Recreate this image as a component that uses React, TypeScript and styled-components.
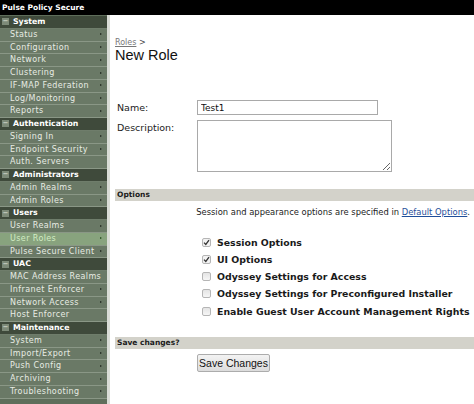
import React from 'react';
import styled, { createGlobalStyle } from 'styled-components';

type NavItem = { label: string; arrow?: boolean; active?: boolean };
type NavGroup = { title: string; items: NavItem[] };

const nav: NavGroup[] = [
  {
    title: 'System',
    items: [
      { label: 'Status', arrow: true },
      { label: 'Configuration', arrow: true },
      { label: 'Network', arrow: true },
      { label: 'Clustering', arrow: true },
      { label: 'IF-MAP Federation', arrow: true },
      { label: 'Log/Monitoring', arrow: true },
      { label: 'Reports', arrow: true },
    ],
  },
  {
    title: 'Authentication',
    items: [
      { label: 'Signing In', arrow: true },
      { label: 'Endpoint Security', arrow: true },
      { label: 'Auth. Servers' },
    ],
  },
  {
    title: 'Administrators',
    items: [
      { label: 'Admin Realms', arrow: true },
      { label: 'Admin Roles', arrow: true },
    ],
  },
  {
    title: 'Users',
    items: [
      { label: 'User Realms', arrow: true },
      { label: 'User Roles', arrow: true, active: true },
      { label: 'Pulse Secure Client', arrow: true },
    ],
  },
  {
    title: 'UAC',
    items: [
      { label: 'MAC Address Realms' },
      { label: 'Infranet Enforcer', arrow: true },
      { label: 'Network Access', arrow: true },
      { label: 'Host Enforcer' },
    ],
  },
  {
    title: 'Maintenance',
    items: [
      { label: 'System', arrow: true },
      { label: 'Import/Export', arrow: true },
      { label: 'Push Config', arrow: true },
      { label: 'Archiving', arrow: true },
      { label: 'Troubleshooting', arrow: true },
    ],
  },
];

const options = [
  { label: 'Session Options', checked: true },
  { label: 'UI Options', checked: true },
  { label: 'Odyssey Settings for Access', checked: false },
  { label: 'Odyssey Settings for Preconfigured Installer', checked: false },
  { label: 'Enable Guest User Account Management Rights', checked: false },
];

function App() {
  return (
    <>
      <GlobalStyle />
      <Page>
        <TopBar>Pulse Policy Secure</TopBar>
        <Body>
          <Sidebar>
            {nav.map((group) => (
              <React.Fragment key={group.title}>
                <GroupHeader>
                  <Collapse>−</Collapse>
                  {group.title}
                </GroupHeader>
                {group.items.map((item) => (
                  <NavRow key={item.label} $active={item.active}>
                    {item.label}
                    {item.arrow && <Arrow $active={item.active} />}
                  </NavRow>
                ))}
              </React.Fragment>
            ))}
          </Sidebar>

          <Main>
            <Crumb>
              <a>Roles</a> &gt;
            </Crumb>
            <Title>New Role</Title>

            <Form>
              <Label>Name:</Label>
              <TextInput defaultValue="Test1" />
              <Label>Description:</Label>
              <TextArea />
            </Form>

            <SectionBar $gap={17}>Options</SectionBar>
            <Note>
              Session and appearance options are specified in <a>Default Options</a>.
            </Note>

            <OptionList>
              {options.map((opt) => (
                <OptionRow key={opt.label}>
                  <Check $checked={opt.checked}>
                    {opt.checked && (
                      <svg width="7" height="7" viewBox="0 0 7 7">
                        <path d="M1 3.6 L2.8 5.4 L6 1.2" fill="none" stroke="#333" strokeWidth="1.3" />
                      </svg>
                    )}
                  </Check>
                  {opt.label}
                </OptionRow>
              ))}
            </OptionList>

            <SectionBar $gap={20}>Save changes?</SectionBar>
            <ButtonRow>
              <SaveButton>Save Changes</SaveButton>
            </ButtonRow>
          </Main>
        </Body>
      </Page>
    </>
  );
}

export default App;

const GlobalStyle = createGlobalStyle`
  html, body {
    margin: 0;
    padding: 0;
    background: #fff;
  }
  body {
    font-family: "DejaVu Sans", Verdana, sans-serif;
    overflow: hidden;
  }
`;

const Page = styled.div`
  width: 474px;
  height: 404px;
  display: flex;
  flex-direction: column;
  overflow: hidden;
`;

const TopBar = styled.div`
  height: 15px;
  flex: none;
  background: #000;
  color: #fff;
  font-weight: 700;
  font-size: 7.5px;
  line-height: 15px;
  padding-left: 2px;
`;

const Body = styled.div`
  display: flex;
  flex: 1;
  min-height: 0;
`;

const Sidebar = styled.nav`
  width: 107px;
  flex: none;
  background: #5f6e5b;
  border-right: 3px solid #d9dcd6;
  padding-top: 1px;
  display: flex;
  flex-direction: column;
`;

const GroupHeader = styled.div`
  height: 11.76px;
  border-bottom: 1px solid #6f7d6b;
  background: #3f4a3b;
  color: #fff;
  font-weight: 700;
  font-size: 7.8px;
  line-height: 12px;
  display: flex;
  align-items: center;
`;

const Collapse = styled.span`
  width: 7px;
  height: 7px;
  margin: 0 4px 0 2px;
  background: #7d8a78;
  color: #e6ebe2;
  font-size: 7px;
  line-height: 7px;
  text-align: center;
  font-weight: 400;
`;

const NavRow = styled.div<{ $active?: boolean }>`
  position: relative;
  height: 11.76px;
  border-bottom: 1px solid #8a9786;
  background: ${({ $active }) => ($active ? '#88a37e' : '#6a7966')};
  color: ${({ $active }) => ($active ? '#d2ecc4' : '#e8ece4')};
  font-size: 8px;
  line-height: 12px;
  padding-left: 10px;
  letter-spacing: 0.4px;
  white-space: nowrap;
`;

const Arrow = styled.span<{ $active?: boolean }>`
  position: absolute;
  right: 5px;
  top: 4.5px;
  width: 0;
  height: 0;
  border-top: 1.5px solid transparent;
  border-bottom: 1.5px solid transparent;
  border-left: 2px solid ${({ $active }) => ($active ? '#1f4a18' : '#1e251c')};
`;

const Main = styled.main`
  flex: 1;
  padding: 23px 0 0 5px;
  font-size: 9px;
  color: #222;
`;

const Crumb = styled.div`
  font-size: 8px;
  color: #444;
  line-height: 10px;

  & a {
    color: #777;
    text-decoration: underline;
  }
`;

const Title = styled.h1`
  margin: 0;
  font-family: "Liberation Sans", Arial, sans-serif;
  font-weight: 400;
  font-size: 14.5px;
  line-height: 15px;
  color: #111;
`;

const Form = styled.div`
  display: grid;
  grid-template-columns: 80px auto;
  row-gap: 5px;
  align-items: start;
  margin-top: 37px;
  padding-left: 2px;
`;

const Label = styled.label`
  font-size: 9.5px;
  line-height: 15px;
  color: #222;
`;

const TextInput = styled.input`
  box-sizing: border-box;
  width: 181px;
  height: 15px;
  border: 1px solid #a9a9a9;
  padding: 0 3px;
  font-family: "DejaVu Sans", Verdana, sans-serif;
  font-size: 9px;
  color: #111;
  outline: none;
`;

const TextArea = styled.textarea`
  box-sizing: border-box;
  width: 195px;
  height: 52px;
  border: 1px solid #a9a9a9;
  resize: both;
  outline: none;
`;

const SectionBar = styled.div<{ $gap: number }>`
  height: 12px;
  margin-top: ${({ $gap }) => $gap}px;
  background: #d3d2ca;
  font-size: 7.5px;
  font-weight: 700;
  line-height: 12px;
  padding-left: 2px;
  color: #1a1a1a;
`;

const Note = styled.div`
  margin-top: 6px;
  padding-right: 4px;
  text-align: right;
  font-size: 8.4px;
  line-height: 10px;
  color: #222;
  white-space: nowrap;

  & a {
    color: #1f4e9a;
    text-decoration: underline;
  }
`;

const OptionList = styled.div`
  margin-top: 19px;
  padding-left: 87px;
  display: flex;
  flex-direction: column;
  gap: 5.3px;
`;

const OptionRow = styled.div`
  display: flex;
  align-items: center;
  gap: 6px;
  height: 12px;
  font-size: 9.4px;
  font-weight: 700;
  color: #1a1a1a;
  white-space: nowrap;
`;

const Check = styled.span<{ $checked?: boolean }>`
  box-sizing: border-box;
  width: 9px;
  height: 9px;
  border: 1px solid #b5b5b5;
  border-radius: 2px;
  background: ${({ $checked }) => ($checked ? '#f2f2f2' : 'linear-gradient(#e4e4e4, #f6f6f6)')};
  display: flex;
  align-items: center;
  justify-content: center;
`;

const ButtonRow = styled.div`
  padding: 5px 0 0 82px;
`;

const SaveButton = styled.button`
  height: 18px;
  width: 73px;
  padding: 0;
  border: 1px solid #acacac;
  border-radius: 2px;
  background: linear-gradient(#f3f3f3, #dcdcdc);
  font-family: "Liberation Sans", Arial, sans-serif;
  font-size: 10.5px;
  color: #111;
`;
